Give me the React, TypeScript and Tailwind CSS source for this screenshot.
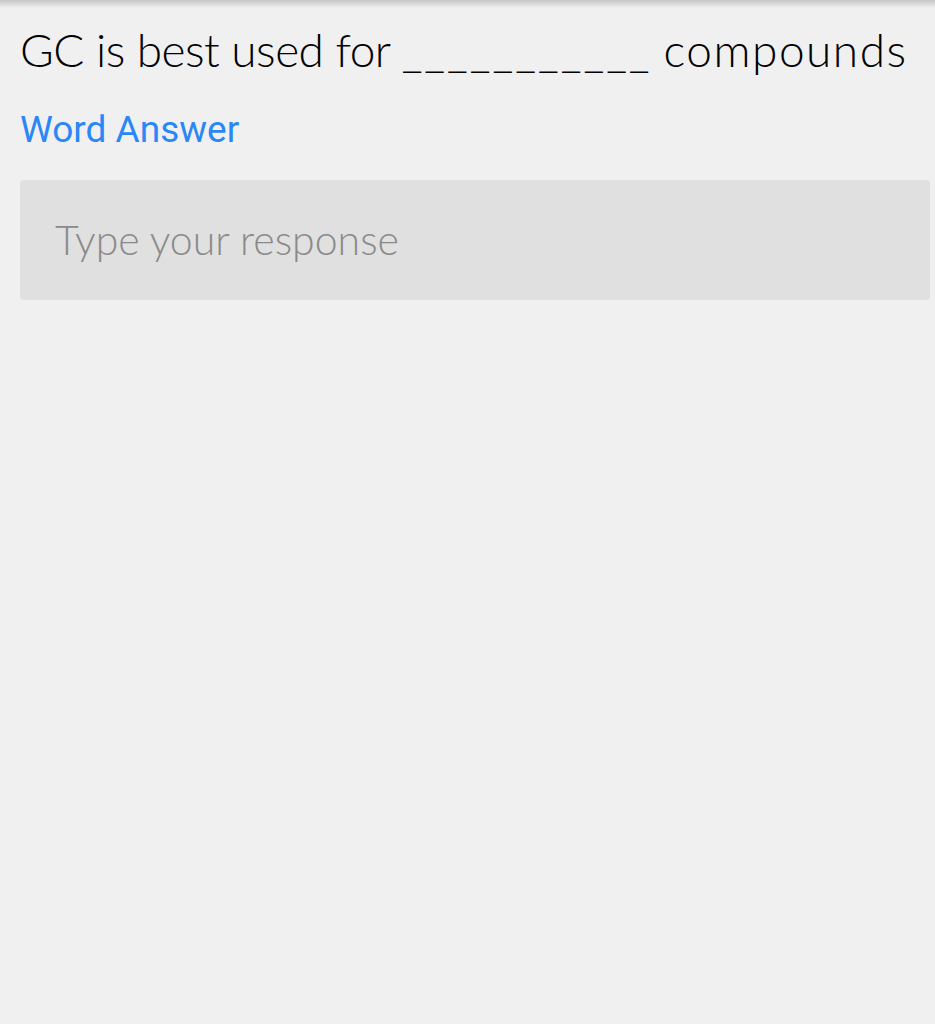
export default function App() {
  return (
    <div className="min-h-[1024px] w-full bg-[#f0f0f0]">
      <div className="h-[8px] w-full bg-gradient-to-b from-[#c6c6c6] to-[#f0f0f0]" />
      <div className="px-[20px]">
        <h1
          className="mt-[10px] whitespace-nowrap text-[46px] font-light leading-[64px] tracking-[-0.5px] text-black"
          style={{ fontFamily: "Lato, 'Open Sans', sans-serif" }}
        >
          GC is best used for <span className="tracking-[2px]">___________</span>{" "}
          <span className="tracking-[1.5px]">compounds</span>
        </h1>
        <p
          className="mt-[26px] text-[37px] leading-[44px] text-[#2a87f5]"
          style={{ fontFamily: "Roboto, 'Liberation Sans', sans-serif" }}
        >
          Word Answer
        </p>
        <div className="mt-[28px] flex h-[120px] w-[910px] items-center rounded-[4px] bg-[#e0e0e0] px-[35px]">
          <span
            className="text-[41px] font-light text-[#8a8a8a]"
            style={{ fontFamily: "Lato, 'Open Sans', sans-serif" }}
          >
            Type your response
          </span>
        </div>
      </div>
    </div>
  );
}
